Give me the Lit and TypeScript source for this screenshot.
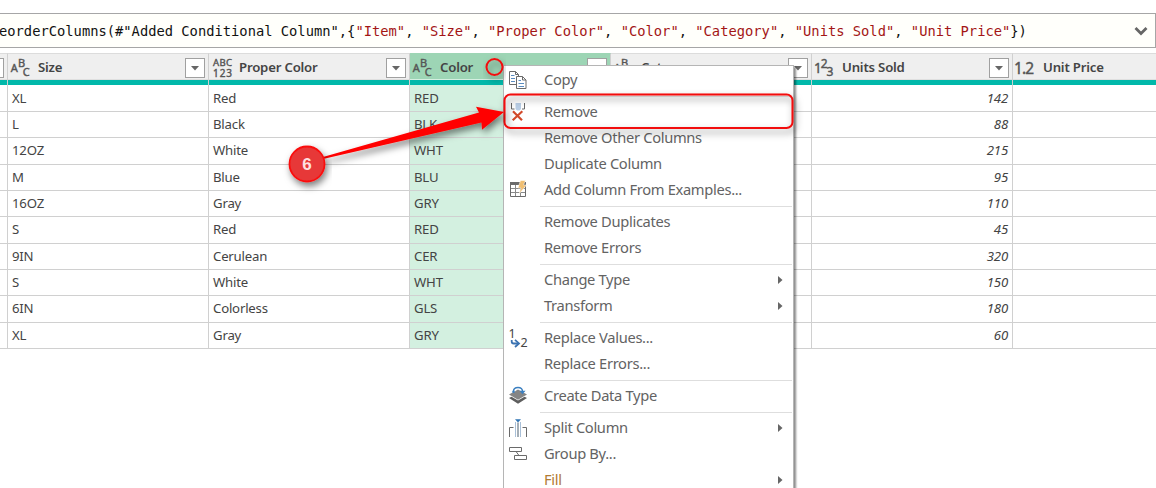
import { LitElement, html, svg, css, nothing } from "lit";
import { customElement } from "lit/decorators.js";
import { classMap } from "lit/directives/class-map.js";

type Kind = "abc" | "any" | "int" | "dec";

const columns: { name: string; kind: Kind; selected?: boolean }[] = [
  { name: "Size", kind: "abc" },
  { name: "Proper Color", kind: "any" },
  { name: "Color", kind: "abc", selected: true },
  { name: "Category", kind: "abc" },
  { name: "Units Sold", kind: "int" },
  { name: "Unit Price", kind: "dec" },
];

const rows = [
  ["XL", "Red", "RED", "", "142", ""],
  ["L", "Black", "BLK", "", "88", ""],
  ["12OZ", "White", "WHT", "", "215", ""],
  ["M", "Blue", "BLU", "", "95", ""],
  ["16OZ", "Gray", "GRY", "", "110", ""],
  ["S", "Red", "RED", "", "45", ""],
  ["9IN", "Cerulean", "CER", "", "320", ""],
  ["S", "White", "WHT", "", "150", ""],
  ["6IN", "Colorless", "GLS", "", "180", ""],
  ["XL", "Gray", "GRY", "", "60", ""],
];

const names = ["Item", "Size", "Proper Color", "Color", "Category", "Units Sold", "Unit Price"];

const typeIcons = {
  abc: svg`<g font-size="11"><text x="2.7" y="18">A</text><text x="10" y="13">B</text><text x="14.800" y="22">C</text></g>`,
  any: svg`<g font-size="9.6"><text x="4" y="11.500" textLength="19">ABC</text><text x="4" y="22.500" font-size="10" textLength="19">123</text></g>`,
  int: svg`<g><text x="2" y="19" font-size="13.5">1</text><text x="8.800" y="14" font-size="12">2</text><text x="14.6" y="22" font-size="12">3</text></g>`,
  dec: svg`<g font-size="15.5"><text x="1" y="19.500" textLength="20">1.2</text></g>`,
};

const icons: Record<string, unknown> = {
  copy: svg`<g fill="#fff" stroke="#6a6a6a">
      <path d="M1.500 4.500h6l3 3v10h-9z"/><path d="M7.500 4.500v3h3" fill="none"/>
      <path d="M3 8.500h3.500M3 11.500h4M3 14.500h4" stroke="#5b8cc0"/>
      <path d="M8.500 9.500h6l3.500 3.500v8.500h-9.500z"/><path d="M14.500 9.500v3.500h3.500" fill="none"/>
      <path d="M10.500 13.500h2.500M10.500 16.500h5.500M10.500 19.500h5.500" stroke="#5b8cc0"/></g>`,
  remove: svg`<path d="M7.500 4h5.500v6l-1.500 1.500h-2.500L7.500 10z" fill="#b9cde5"/>
      <path d="M3.500 4v6H6.500M16.500 4v6H14" fill="none" stroke="#686868"/>
      <path d="M5 12.300l9 9M14.300 12.300l-9.600 9" fill="none" stroke="#d2492a" stroke-width="2.200"/>`,
  table: svg`<path d="M2.500 5.500h15v14h-15z" fill="#fff" stroke="#6a6a6a"/><path d="M2 5h16v3H2z" fill="#6a6a6a"/>
      <path d="M3 11.500h14M3 15.500h14M7.500 8v11M12.500 8v11" stroke="#8a8a8a"/>
      <path d="M12.500 3.500h5l-2 4.500h3l-7.500 9 2-6h-3z" fill="#f0bf72" stroke="#fff" stroke-width=".5"/>`,
  replace: svg`<text x=".5" y="13" font-size="12.500">1</text><text x="12.500" y="22" font-size="12.500">2</text>
      <path d="M3.700 15v1.500q0 2 2 2h4.500" fill="none" stroke="#3b73b2" stroke-width="1.800"/>
      <path d="M7 14.800l4 3.600-4 3.600" fill="none" stroke="#3b73b2" stroke-width="1.800"/>`,
  layers: svg`<path d="M1 15l2.500-1.200 6.500 3.800 6.500-3.800 2.500 1.200-9 5.800z" fill="#5e5e5e"/>
      <path d="M1 11.500l9-5 9 5-9 5.300z" fill="#858585"/>
      <path d="M5.500 8.500q0-4.300 4.500-4.300 4.500 0 4.500 4" fill="none" stroke="#fff" stroke-width="3.400"/>
      <path d="M5.500 8.300q0-3.800 4.500-3.800 4.500 0 4.500 4" fill="none" stroke="#3b7fc0" stroke-width="1.400"/>
      <path d="M11.500 7.800h6l-3 3.500z" fill="#3b7fc0"/><circle cx="5.500" cy="8.800" r="1.300" fill="#3b7fc0"/>`,
  split: svg`<path d="M1.500 22v-9.500h4M18.500 22v-9.500h-4" fill="none" stroke="#6a6a6a"/>
      <path d="M7.500 7v15M12.500 7v15" stroke="#a9c0d8"/><path d="M10 7.500V22" stroke="#87949f" stroke-width="1.500"/>
      <path d="M7 4.200h6L10 7.500z" fill="#2f74b5"/>`,
  group: svg`<g fill="none" stroke="#6a6a6a"><path d="M1.500 6.500h12v4h-12zM6.500 14.500h12v4h-12zM8 10.500l3 4"/></g>`,
};

type Item = { label: string; icon?: string; more?: boolean; hot?: boolean };
const groups: Item[][] = [
  [{ label: "Copy", icon: "copy" }],
  [
    { label: "Remove", icon: "remove" },
    { label: "Remove Other Columns" },
    { label: "Duplicate Column" },
    { label: "Add Column From Examples...", icon: "table" },
  ],
  [{ label: "Remove Duplicates" }, { label: "Remove Errors" }],
  [{ label: "Change Type", more: true }, { label: "Transform", more: true }],
  [{ label: "Replace Values...", icon: "replace" }, { label: "Replace Errors..." }],
  [{ label: "Create Data Type", icon: "layers" }],
  [
    { label: "Split Column", icon: "split", more: true },
    { label: "Group By...", icon: "group" },
    { label: "Fill", more: true, hot: true },
  ],
];

@customElement("formula-bar")
export class FormulaBar extends LitElement {
  static styles = css`
    :host { display: flex; box-sizing: border-box; height: 35px; align-items: center; justify-content: space-between;
      background: #fffffb; border: 1px solid #a6a6a6; border-left: 0; color: #111; }
    .code { font: 13.77px/32px "DejaVu Sans Mono", monospace; white-space: pre; margin-left: -1px; }
    .str { color: #a31515; }
    .chev { width: 14px; height: 10px; margin-right: 7px; }
  `;
  render() {
    return html`<div class="code">eorderColumns(#"Added Conditional Column",{${names.map(
      (n, i) => html`${i ? ", " : ""}<span class="str">"${n}"</span>`
    )}})</div>
      <svg class="chev" viewBox="0 0 14 10"><path d="M1.500 2L7 7.500 12.500 2" fill="none" stroke="#666" stroke-width="2.800"/></svg>`;
  }
}

@customElement("data-grid")
export class DataGrid extends LitElement {
  static styles = css`
    :host { display: block; color: #444; font: 13.2px/25px "Noto Sans", "Open Sans", sans-serif; }
    .row { display: grid; grid-template-columns: 8px repeat(5, 201px) 201px; height: 26.3333px; }
    .head + .row { height: 27.0833px; }
    .head + .row .cell { padding-top: 0.75px; }
    .cell { box-sizing: border-box; border-right: 1px solid #d0d0d0; border-bottom: 1px solid #d0d0d0; padding: 0 4px;
      letter-spacing: -0.2px; white-space: nowrap; overflow: hidden; }
    .cell.edge { padding-left: 0; padding-right: 0; }
    .num { text-align: right; font-style: italic; }
    .row.head { height: 32px; line-height: 26px; }
    .hc { box-sizing: border-box; display: flex; align-items: center; border-right: 1px solid #d0d0d0; border-top: 1px solid #dcdcdc;
      background: linear-gradient(#efefef 0 25px, #dfdfdf 25px 26px, #01b8aa 26px); padding: 0 3px 5px 0; overflow: hidden; }
    .hc.sel { background: linear-gradient(#9dd5b5 0 25px, #d5efe1 25px 26px, #01b8aa 26px); border-top-color: #9dd5b5; }
    .cell.sel { background: #d3f0e0; }
    .first { justify-content: flex-end; }
    .type { width: 30px; height: 26px; flex: none; fill: #555; stroke: #555; stroke-width: .4px; font-family: "Noto Sans", sans-serif; }
    .name { flex: 1; font-weight: 600; letter-spacing: -0.2px; }
    .drop { box-sizing: border-box; flex: none; width: 20px; height: 20px; margin-top: 2px; border: 1px solid #a0a0a0; background: #fff; }
  `;
  private drop() {
    return html`<svg class="drop" viewBox="0 0 18 18"><path d="M5 7h8l-4 4.500z" fill="#666"/></svg>`;
  }
  render() {
    return html`<div class="row head"><div class="hc first">${this.drop()}</div>
      ${columns.map((c) => html`<div class=${classMap({ hc: true, sel: !!c.selected })}>
        <svg class="type" viewBox="0 0 30 26">${typeIcons[c.kind]}</svg><span class="name">${c.name}</span>${this.drop()}</div>`)}</div>
      ${rows.map((r) => html`<div class="row"><div class="cell edge"></div>${r.map((v, i) => html`<div
        class=${classMap({ cell: true, sel: !!columns[i].selected, num: i > 3 })}>${v}</div>`)}</div>`)}`;
  }
}

@customElement("context-menu")
export class ContextMenu extends LitElement {
  static styles = css`
    :host { display: block; box-sizing: border-box; width: 291px; border: 1px solid #b5b5b5; background: #fff; padding-top: 1px;
      box-shadow: 2px 2px 2px rgba(0,0,0,.45); color: #636363; font: 14.7px/24px "Noto Sans", "Open Sans", sans-serif; }
    .sep { height: 6px; display: flex; align-items: center; padding: 1px 1px 0 36px; box-sizing: border-box; }
    .line { flex: 1; height: 1px; background: #dedede; }
    .item { display: grid; grid-template-columns: 36px 1fr 18px; height: 26px; align-items: center; }
    .ico { display: block; width: 20px; height: 26px; margin-left: 4px; fill: #444; font-family: "Noto Sans", sans-serif; }
    .label { padding: 0 0 2px 4px; letter-spacing: -0.32px; white-space: nowrap; }
    .hot { color: #b27b33; }
    .more { width: 5px; height: 8px; margin-left: 3px; }
  `;
  render() {
    return groups.map((g, gi) => html`${gi ? html`<div class="sep"><div class="line"></div></div>` : nothing}
      ${g.map((it) => html`<div class="item">
        <span>${it.icon ? html`<svg class="ico" viewBox="0 0 20 26">${icons[it.icon]}</svg>` : nothing}</span>
        <span class=${classMap({ label: true, hot: !!it.hot })}>${it.label}</span>
        ${it.more ? html`<svg class="more" viewBox="0 0 5 8"><path d="M0 0l4.500 4L0 8z" fill="#666"/></svg>` : nothing}
      </div>`)}`);
  }
}

@customElement("app-root")
export class AppRoot extends LitElement {
  static styles = css`
    :host { display: flex; flex-direction: column; gap: 5px; box-sizing: border-box; position: relative; width: 1156px; height: 488px;
      padding-top: 13px; overflow: hidden; background: #fff; }
    data-grid { overflow: hidden; }
    context-menu { position: absolute; left: 503px; top: 65px; height: 440px; }
    .marks { position: absolute; inset: 0; width: 1156px; height: 488px; }
    .num { font: bold 17px "Liberation Sans", sans-serif; }
  `;
  render() {
    return html`<formula-bar></formula-bar><data-grid></data-grid><context-menu></context-menu>
      <svg class="marks" viewBox="0 0 1156 488">
        <defs><filter id="sh" x="-20%" y="-50%" width="140%" height="220%"><feDropShadow dx="2" dy="4" stdDeviation="3.500" flood-color="#000" flood-opacity=".5"/></filter></defs>
        <g filter="url(#sh)"><rect x="504.500" y="94.500" width="288" height="33.500" rx="6" fill="none" stroke="#f20d0d" stroke-width="2"/></g>
        <circle cx="494.500" cy="67" r="8" fill="none" stroke="#f20d0d" stroke-width="2" filter="url(#sh)"/>
        <path d="M323 157L479 112.500 476 106.700 504 112 482 129.700 481.500 122.500 323 159z" fill="#ff0000" filter="url(#sh)"/>
        <circle cx="307" cy="164" r="17.500" fill="#e73838" stroke="#fa1010" stroke-width="1.800" filter="url(#sh)"/>
        <text class="num" x="307" y="170" text-anchor="middle" fill="#ffe0e0">6</text>
      </svg>`;
  }
}
